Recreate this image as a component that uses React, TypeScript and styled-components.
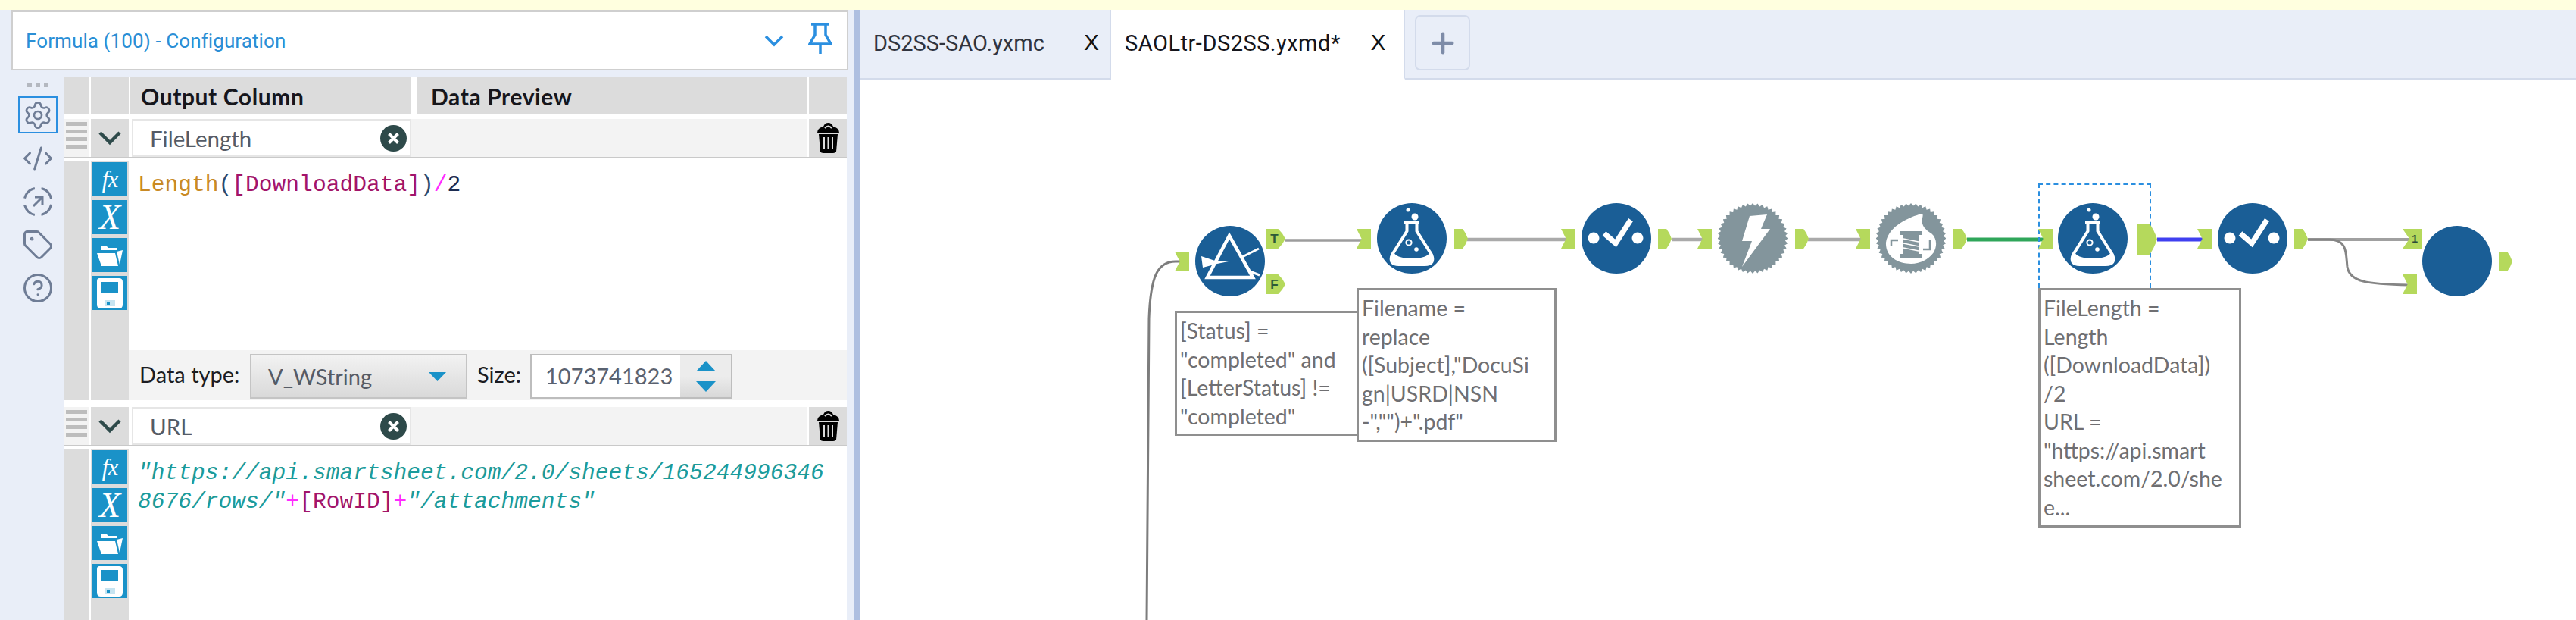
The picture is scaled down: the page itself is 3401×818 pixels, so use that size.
import React from "react";
import styled, { createGlobalStyle } from "styled-components";
import { Settings, CodeXml, Tag, CircleHelp, Plus } from "lucide-react";

const Global = createGlobalStyle`
  html, body { margin: 0; padding: 0; background: #fff; }
  #root { width: 3401px; height: 818px; overflow: hidden; }
  * { box-sizing: border-box; }
`;

const SANS = `Lato, "Liberation Sans", sans-serif`;
const DIN = `Roboto, "Liberation Sans", sans-serif`;
const MONO = `"Liberation Mono", monospace`;
const SERIF = `"Liberation Serif", serif`;
const RAIL = "#e9eef8";
const GRAY = "#dcdcdc";
const STRIP = "#f3f3f3";
const BTN = "#1a92c8";

const Page = styled.div`
  width: 3401px; height: 818px; display: flex; flex-direction: column; overflow: hidden; background: #fff;
`;
const Banner = styled.div`height: 13px; flex: none; background: #ffffdf;`;
const Main = styled.div`flex: 1; display: flex; min-height: 0;`;
const LeftPane = styled.div`
  width: 1128px; flex: none; background: ${RAIL}; padding: 0 5px 0 15px; display: flex; flex-direction: column;
`;
const ConfigHeader = styled.div`
  height: 80px; flex: none; background: #fff; border: 2px solid #cfcfcf; border-top-width: 3px;
  display: flex; align-items: center; padding: 0 19px 0 17px;
  margin-right: 3px;
`;
const Title = styled.div`
  font: 26px ${DIN}; color: #2b8fd6; flex: 1; white-space: nowrap; letter-spacing: 0.1px;
`;
const HeaderChevron = styled.svg`width: 26px; height: 16px; margin-right: 32px; flex: none;`;
const PinIcon = styled.svg`width: 32px; height: 42px; flex: none; margin-top: -6px;`;
const ConfigBody = styled.div`flex: 1; display: flex; margin-top: 9px; min-height: 0;`;
const SideRail = styled.div`
  width: 70px; flex: none; display: flex; flex-direction: column; align-items: center; color: #6f7d96;
`;
const Dots = styled.div`display: flex; gap: 5px; height: 25px; padding-top: 7px;`;
const Dot = styled.i`width: 6px; height: 6px; background: #b4b8c0; display: block;`;
const RailSlot = styled.div<{ $active?: boolean }>`
  width: 52px; height: 49px; margin-bottom: 8px; display: flex; align-items: center; justify-content: center;
  border: 2px solid ${(p) => (p.$active ? "#2b8fe0" : "transparent")};
`;
const Form = styled.div`
  width: 1033px; flex: none; background: #fff; display: flex; flex-direction: column;
`;
const HeadRow = styled.div`display: flex; height: 49px; flex: none; margin-bottom: 6px;`;
const HeadCell = styled.div<{ $w: number; $gap: number }>`
  width: ${(p) => p.$w}px; margin-left: ${(p) => p.$gap}px; flex: none; background: ${GRAY};
  font: 700 30px ${SANS}; letter-spacing: 0.6px; color: #16161c; display: flex; align-items: center;
  padding-left: ${(p) => (p.$w > 400 ? 19 : p.$w > 100 ? 14 : 0)}px;
`;
const FieldRow = styled.div`
  display: flex; height: 52px; flex: none; border-bottom: 2px solid #c9c9c9; background: #fff;
`;
const Handle = styled.div`
  width: 32px; flex: none; background: ${STRIP}; display: flex; flex-direction: column; gap: 5px; padding: 4px 2px 0;
`;
const HandleBar = styled.i`display: block; height: 5px; background: #bdbdbd;`;
const ChevronCell = styled.div`
  width: 50px; margin-left: 3px; flex: none; background: ${GRAY}; display: flex; align-items: center; justify-content: center;
`;
const NameBox = styled.div`
  width: 369px; margin-left: 4px; flex: none; background: #fff; border: 2px solid #e6e6e6; display: flex; align-items: center;
  justify-content: space-between; padding: 0 4px 0 22px; font: 29.5px ${SANS}; color: #555b66;
`;
const RowFill = styled.div`flex: 1; background: ${STRIP};`;
const TrashCell = styled.div`
  width: 50px; margin-left: 2px; flex: none; background: ${GRAY}; display: flex; align-items: center; justify-content: center;
`;
const Block = styled.div<{ $h?: number }>`
  display: flex; flex: ${(p) => (p.$h ? `0 0 ${p.$h}px` : 1)}; min-height: 0; margin-bottom: ${(p) => (p.$h ? 9 : 0)}px;
`;
const Gutter = styled.div`width: 32px; flex: none; background: ${GRAY}; margin-top: 3px;`;
const ToolCol = styled.div`
  width: 50px; margin-left: 3px; margin-top: 3px; flex: none; background: ${GRAY}; display: flex; flex-direction: column;
  gap: 5px; padding: 2px 2px 0;
`;
const ToolBtn = styled.div`
  width: 46px; height: 45px; background: ${BTN}; color: #fff; display: flex; align-items: center; justify-content: center;
  font: italic 36px ${SERIF}; flex: none;
`;
const FxText = styled.span`font-size: 31px; letter-spacing: -1px;`;
const VarText = styled.span`font-size: 46px; line-height: 45px;`;
const Editor = styled.div`flex: 1; display: flex; flex-direction: column; min-width: 0;`;
const Code = styled.div`
  flex: 1; padding: 16px 18px 0 12px; font: 29.6px/38px ${MONO}; color: #1d2c50; word-break: break-all;
`;
const Fn = styled.span`color: #c98a24;`;
const Paren = styled.span`color: #2c4a6e;`;
const Field = styled.span`color: #a3146a;`;
const Op = styled.span`color: #ff2bff;`;
const Str = styled.span`color: #1b9b9b; font-style: italic;`;
const DataStrip = styled.div`
  height: 66px; flex: none; background: ${STRIP}; display: flex; align-items: flex-start; padding: 5px 0 0 14px;
  font: 29px ${SANS}; color: #1c1c22;
`;
const StripLabel = styled.span<{ $w: number }>`width: ${(p) => p.$w}px; flex: none; line-height: 54px;`;
const Dropdown = styled.div`
  width: 287px; height: 59px; flex: none; border: 2px solid #c4c4c4; background: linear-gradient(#f2f2f2, #d9d9d9);
  display: flex; align-items: center; justify-content: space-between; padding: 0 26px 0 22px; color: #555b66; margin-right: 13px;
`;
const SizeBox = styled.div`
  width: 267px; height: 59px; flex: none; border: 2px solid #bdbdbd; display: flex; background: #fff; color: #5a6270;
`;
const SizeValue = styled.div`width: 196px; flex: none; padding-left: 18px; line-height: 54px;`;
const Spinner = styled.div`
  flex: 1; display: flex; flex-direction: column; background: linear-gradient(#ececec 50%, #d8d8d8);
  align-items: center; justify-content: center; gap: 13px;
`;
const Tri = styled.svg<{ $w: number; $h: number }>`width: ${(p) => p.$w}px; height: ${(p) => p.$h}px; flex: none; display: block;`;

const Splitter = styled.div`width: 7px; flex: none; background: #aebfe0;`;
const RightPane = styled.div`flex: 1; display: flex; flex-direction: column; min-width: 0;`;
const TabBar = styled.div`
  height: 92px; flex: none; display: flex; background: ${RAIL};
`;
const Tab = styled.div<{ $active?: boolean; $w: number }>`
  width: ${(p) => p.$w}px; flex: none; background: ${(p) => (p.$active ? "#fff" : RAIL)};
  border-bottom: 2px solid ${(p) => (p.$active ? "#fff" : "#d3dbeb")};
  border-right: 1px solid #d3dbeb;
  display: flex; align-items: center; justify-content: space-between;
  padding: 0 ${(p) => (p.$active ? 24 : 15)}px 2px 18px;
  font: 29px ${DIN}; letter-spacing: ${(p) => (p.$active ? 0.5 : 0)}px; color: ${(p) => (p.$active ? "#15151b" : "#30343f")}; white-space: nowrap;
`;
const TabClose = styled.span`font: 30px "Liberation Sans", sans-serif; color: #111; margin-top: -2px;`;
const TabRest = styled.div`flex: 1; border-bottom: 2px solid #d3dbeb; display: flex; padding: 7px 0 0 13px;`;
const AddTab = styled.div`
  width: 73px; height: 73px; border: 2px solid #d3dbeb; border-radius: 7px; display: flex; align-items: center; justify-content: center; color: #7e8ca8;
`;
const Canvas = styled.div`flex: 1; position: relative; background: #fff; overflow: hidden;`;
const Wires = styled.svg`position: absolute; left: 0; top: 0; width: 2266px; height: 713px;`;
const NodeBox = styled.svg<{ $x: number; $y: number }>`
  position: absolute; left: ${(p) => p.$x - 1135}px; top: ${(p) => p.$y - 105}px; width: 92px; height: 93px;
`;
const AnchorBox = styled.svg<{ $x: number; $y: number; $w: number; $h: number }>`
  position: absolute; left: ${(p) => p.$x - 1135}px; top: ${(p) => p.$y - 105}px; width: ${(p) => p.$w}px; height: ${(p) => p.$h}px;
`;
const Selection = styled.div`
  position: absolute; left: ${2691 - 1135}px; top: ${242 - 105}px; width: 149px; height: 138px;
  border: 2px dashed #2b8fe0; border-bottom: none;
`;
const Annotation = styled.div<{ $x: number; $y: number; $w: number; $h: number; $pt: number }>`
  position: absolute; left: ${(p) => p.$x - 1135}px; top: ${(p) => p.$y - 105}px; width: ${(p) => p.$w}px; height: ${(p) => p.$h}px;
  border: 3px solid #8f8f8f; background: #fff; padding: ${(p) => p.$pt}px 0 0 4px;
  font: 28.5px/37.5px ${SANS}; color: #6f6f72; white-space: pre;
`;
const NoteLine = styled.div`white-space: pre;`;

const ANCHOR = "#b5d95c";

function OutAnchor({ x, y, w = 18, h = 26, label }: { x: number; y: number; w?: number; h?: number; label?: string }) {
  return (
    <AnchorBox $x={x} $y={y} $w={w} $h={h} viewBox={`0 0 ${w} ${h}`}>
      <path d={`M0 0H${w * 0.62}Q${w * 0.85} ${h * 0.2} ${w} ${h / 2}Q${w * 0.85} ${h * 0.8} ${w * 0.62} ${h}H0Z`} fill={ANCHOR} />
      {label && <text x={w * 0.42} y={h / 2 + 6} textAnchor="middle" fontSize="17" fontWeight="700" fontFamily="Liberation Sans" fill="#2c5a38">{label}</text>}
    </AnchorBox>
  );
}
function InAnchor({ x, y, w = 19, h = 26, label }: { x: number; y: number; w?: number; h?: number; label?: string }) {
  return (
    <AnchorBox $x={x} $y={y} $w={w} $h={h} viewBox={`0 0 ${w} ${h}`}>
      <path d={`M0 0H${w}V${h}H0L${w * 0.35} ${h / 2}Z`} fill={ANCHOR} />
      {label && <text x={w * 0.62} y={h / 2 + 5} textAnchor="middle" fontSize="14" fontWeight="700" fontFamily="Liberation Sans" fill="#2c4a38">{label}</text>}
    </AnchorBox>
  );
}

const BLUE = "#1a5e96";
const SLATE = "#83959c";

function serrated(): string {
  const n = 44;
  let d = "";
  for (let i = 0; i < n * 2; i++) {
    const r = i % 2 === 0 ? 46.5 : 43;
    const a = (i * Math.PI) / n;
    d += `${i === 0 ? "M" : "L"}${(46 + r * Math.cos(a)).toFixed(2)} ${(46.5 + r * Math.sin(a)).toFixed(2)}`;
  }
  return d + "Z";
}

function FlaskNode({ x }: { x: number }) {
  return (
    <NodeBox $x={x} $y={268} viewBox="0 0 92 93">
      <ellipse cx="46" cy="46.5" rx="46" ry="46.5" fill={BLUE} />
      <circle cx="50" cy="18" r="4.5" fill="#fff" />
      <circle cx="41" cy="9" r="2.5" fill="#fff" />
      <path d="M36 26H56M39.5 26V37L20 68Q15 81 29 81H63Q77 81 72 68L52.5 37V26" fill="none" stroke="#fff" strokeWidth="4" strokeLinejoin="round" />
      <path d="M21 63Q24 73 46 73Q68 73 71 63Q78 79 62 80H30Q14 79 21 63Z" fill="#fff" />
      <circle cx="42" cy="52" r="3.6" fill="none" stroke="#fff" strokeWidth="2" />
      <circle cx="52" cy="61" r="2.8" fill="#fff" />
    </NodeBox>
  );
}
function CheckNode({ x }: { x: number }) {
  return (
    <NodeBox $x={x} $y={268} viewBox="0 0 92 93">
      <ellipse cx="46" cy="46.5" rx="46" ry="46.5" fill={BLUE} />
      <circle cx="16" cy="46" r="7.5" fill="#fff" />
      <circle cx="74" cy="46" r="7.5" fill="#fff" />
      <path d="M30 40L45 53L65 22" fill="none" stroke="#fff" strokeWidth="7" />
    </NodeBox>
  );
}

function SideIconShare() {
  return (
    <svg width="40" height="40" viewBox="0 0 40 40" fill="none" stroke="currentColor" strokeWidth="3">
      <circle cx="20" cy="20" r="18" strokeDasharray="19.5 8.8" strokeDashoffset="-4" />
      <path d="M14 26L25 15M16 14H26V24" />
    </svg>
  );
}
function Trash() {
  return (
    <svg width="31" height="42" viewBox="0 0 31 42">
      <path d="M1 14Q1 8 9 6Q11 1 15.5 1Q20 1 22 6Q30 8 30 14Z" fill="#000" />
      <path d="M11 8Q15.5 3 20 8" fill="none" stroke="#ddd" strokeWidth="2" />
      <path d="M3 16H28L26 39Q25 41 22 41H9Q6 41 5 39Z" fill="#000" />
      <path d="M10 20V36M15.5 20V36M21 20V36" stroke="#dcdcdc" strokeWidth="2" />
    </svg>
  );
}
function Clear() {
  return (
    <svg width="35" height="35" viewBox="0 0 35 35">
      <circle cx="17.5" cy="17.5" r="17.5" fill="#2e4a4a" />
      <path d="M11.5 11.5L23.5 23.5M23.5 11.5L11.5 23.5" stroke="#fff" strokeWidth="4" />
    </svg>
  );
}
function Chevron() {
  return (
    <svg width="30" height="20" viewBox="0 0 30 20">
      <path d="M2 3L15 16L28 3" fill="none" stroke="#2e4a4a" strokeWidth="4.5" />
    </svg>
  );
}
function FolderIcon() {
  return (
    <svg width="36" height="30" viewBox="0 0 36 30">
      <path d="M6 6V3H14L16 5H28V8H6Z" fill="#fff" />
      <path d="M1 12H25L29 29H7Z" fill="#fff" />
      <path d="M27 10L35 8L31 27Z" fill="#fff" />
    </svg>
  );
}
function SaveIcon() {
  return (
    <svg width="36" height="40" viewBox="0 0 36 40">
      <path d="M4 0H30Q35 0 35 5V35Q35 40 30 40H6Q1 40 1 35V4Q1 0 4 0Z" fill="#fff" />
      <rect x="7" y="5" width="22" height="15" fill={BTN} />
      <rect x="11" y="29" width="14" height="8" fill={BTN} opacity="0.25" />
      <rect x="14" y="31" width="4" height="4" fill={BTN} />
    </svg>
  );
}

function Tools() {
  return (
    <ToolCol>
      <ToolBtn><FxText>fx</FxText></ToolBtn>
      <ToolBtn><VarText>X</VarText></ToolBtn>
      <ToolBtn><FolderIcon /></ToolBtn>
      <ToolBtn><SaveIcon /></ToolBtn>
    </ToolCol>
  );
}

function Row({ name }: { name: string }) {
  return (
    <FieldRow>
      <Handle>{[0, 1, 2, 3].map((i) => <HandleBar key={i} />)}</Handle>
      <ChevronCell><Chevron /></ChevronCell>
      <NameBox>{name}<Clear /></NameBox>
      <RowFill />
      <TrashCell><Trash /></TrashCell>
    </FieldRow>
  );
}

export default function App() {
  return (
    <Page>
      <Global />
      <Banner />
      <Main>
        <LeftPane>
          <ConfigHeader>
            <Title>Formula (100) - Configuration</Title>
            <HeaderChevron viewBox="0 0 26 16"><path d="M2 2L13 13L24 2" fill="none" stroke="#2b8fe0" strokeWidth="3.5" /></HeaderChevron>
            <PinIcon viewBox="0 0 32 42">
              <path d="M4 2H28M9 2V8L9 16L2 28H30L23 16V2M16 28V41" fill="none" stroke="#2b8fe0" strokeWidth="3.5" />
            </PinIcon>
          </ConfigHeader>
          <ConfigBody>
            <SideRail>
              <Dots><Dot /><Dot /><Dot /></Dots>
              <RailSlot $active><Settings size={40} strokeWidth={1.6} /></RailSlot>
              <RailSlot><CodeXml size={42} strokeWidth={1.7} /></RailSlot>
              <RailSlot><SideIconShare /></RailSlot>
              <RailSlot><Tag size={42} strokeWidth={1.7} /></RailSlot>
              <RailSlot><CircleHelp size={42} strokeWidth={1.7} /></RailSlot>
            </SideRail>
            <Form>
              <HeadRow>
                <HeadCell $w={32} $gap={0} />
                <HeadCell $w={50} $gap={3} />
                <HeadCell $w={370} $gap={2}>Output Column</HeadCell>
                <HeadCell $w={515} $gap={8}>Data Preview</HeadCell>
                <HeadCell $w={50} $gap={3} />
              </HeadRow>
              <Row name="FileLength" />
              <Block $h={319}>
                <Gutter />
                <Tools />
                <Editor>
                  <Code><Fn>Length</Fn><Paren>(</Paren><Field>[DownloadData]</Field><Paren>)</Paren><Op>/</Op>2</Code>
                  <DataStrip>
                    <StripLabel $w={146}>Data type:</StripLabel>
                    <Dropdown>V_WString<Tri $w={23} $h={12} viewBox="0 0 23 12"><path d="M0 0H23L11.5 12Z" fill={BTN} /></Tri></Dropdown>
                    <StripLabel $w={70}>Size:</StripLabel>
                    <SizeBox>
                      <SizeValue>1073741823</SizeValue>
                      <Spinner>
                        <Tri $w={26} $h={14} viewBox="0 0 26 14"><path d="M13 0L26 14H0Z" fill={BTN} /></Tri>
                        <Tri $w={26} $h={14} viewBox="0 0 26 14"><path d="M0 0H26L13 14Z" fill={BTN} /></Tri>
                      </Spinner>
                    </SizeBox>
                  </DataStrip>
                </Editor>
              </Block>
              <Row name="URL" />
              <Block>
                <Gutter />
                <Tools />
                <Editor>
                  <Code>
                    <Str>"https://api.smartsheet.com/2.0/sheets/1652449963468676/rows/"</Str><Op>+</Op><Field>[RowID]</Field><Op>+</Op><Str>"/attachments"</Str>
                  </Code>
                </Editor>
              </Block>
            </Form>
          </ConfigBody>
        </LeftPane>
        <Splitter />
        <RightPane>
          <TabBar>
            <Tab $w={332}>DS2SS-SAO.yxmc<TabClose>X</TabClose></Tab>
            <Tab $w={388} $active>SAOLtr-DS2SS.yxmd*<TabClose>X</TabClose></Tab>
            <TabRest><AddTab><Plus size={42} strokeWidth={2.6} /></AddTab></TabRest>
          </TabBar>
          <Canvas>
            <Wires viewBox="1135 105 2266 713">
              <path d="M1560 345H1552C1528 345 1519 365 1517 420L1514 818" fill="none" stroke="#7d7d7d" strokeWidth="3" />
              <path d="M1697 317H1800" stroke="#9c9c9c" strokeWidth="3.5" />
              <path d="M1937 316H2070" stroke="#aaa" strokeWidth="4.5" />
              <path d="M2207 316H2250" stroke="#aaa" strokeWidth="4.5" />
              <path d="M2387 316H2460" stroke="#aaa" strokeWidth="4.5" />
              <path d="M2597 316H2700" stroke="#2fa65a" strokeWidth="5" />
              <path d="M2848 316H2910" stroke="#4040f0" strokeWidth="5" />
              <path d="M3047 316H3180" stroke="#a0a0a0" strokeWidth="4" fill="none" />
              <path d="M3047 316H3075C3100 316 3097 335 3099 352C3102 372 3125 375 3180 376" stroke="#858585" strokeWidth="3" fill="none" />
            </Wires>
            <Selection />

            <InAnchor x={1551} y={332} />
            <NodeBox $x={1578} $y={298} viewBox="0 0 92 93">
              <ellipse cx="46" cy="46.5" rx="46" ry="46.5" fill={BLUE} />
              <path d="M45 13L16 68H76Z" fill="none" stroke="#fff" strokeWidth="4.5" strokeLinejoin="miter" />
              <path d="M8 40L29 47L49 46L29 50L10 55Z" fill="#fff" />
              <path d="M62 41L84 30M72 60L85 65" stroke="#fff" strokeWidth="3" />
            </NodeBox>
            <OutAnchor x={1672} y={302} w={25} label="T" />
            <OutAnchor x={1672} y={362} w={25} label="F" />

            <InAnchor x={1791} y={302} />
            <FlaskNode x={1818} />
            <OutAnchor x={1920} y={302} />

            <InAnchor x={2061} y={302} />
            <CheckNode x={2088} />
            <OutAnchor x={2189} y={302} />

            <InAnchor x={2241} y={302} />
            <NodeBox $x={2268} $y={268} viewBox="0 0 92 93">
              <path d={serrated()} fill={SLATE} />
              <path d="M42 17L65 15L57 34L69 34L32 84L45 50L32 50Z" fill="#fff" />
            </NodeBox>
            <OutAnchor x={2370} y={302} />

            <InAnchor x={2450} y={302} />
            <NodeBox $x={2477} $y={268} viewBox="0 0 92 93">
              <path d={serrated()} fill={SLATE} />
              <path d="M13 52C16 30 45 18 60 14C62 14 62 16 61 20C59 30 66 36 73 40C80 46 81 56 76 65C68 76 56 80 46 80C28 80 12 70 13 52Z" fill="#fff" />
              <path d="M31 37H61V42H56V67H61V72H31V67H36V42H31Z" fill={SLATE} />
              <path d="M36 47L56 51M36 53L56 57M36 59L56 63" stroke="#fff" strokeWidth="1.5" />
              <path d="M20 57V49H29M71 49V61H62" fill="none" stroke={SLATE} strokeWidth="2.5" />
            </NodeBox>
            <OutAnchor x={2579} y={302} />

            <InAnchor x={2691} y={302} />
            <FlaskNode x={2717} />
            <OutAnchor x={2821} y={295} w={27} h={41} />

            <InAnchor x={2901} y={302} />
            <CheckNode x={2928} />
            <OutAnchor x={3029} y={302} />

            <InAnchor x={3172} y={302} w={26} label="1" />
            <InAnchor x={3172} y={362} w={19} />
            <NodeBox $x={3198} $y={298} viewBox="0 0 92 93">
              <ellipse cx="46" cy="46.5" rx="46" ry="46.5" fill={BLUE} />
            </NodeBox>
            <OutAnchor x={3299} y={332} />

            <Annotation $x={1551} $y={410} $w={260} $h={165} $pt={5}>
              <NoteLine>[Status] =</NoteLine>
              <NoteLine>"completed" and</NoteLine>
              <NoteLine>[LetterStatus] !=</NoteLine>
              <NoteLine>"completed"</NoteLine>
            </Annotation>
            <Annotation $x={1791} $y={380} $w={264} $h={203} $pt={5}>
              <NoteLine>Filename =</NoteLine>
              <NoteLine>replace</NoteLine>
              <NoteLine>([Subject],"DocuSi</NoteLine>
              <NoteLine>gn|USRD|NSN</NoteLine>
              <NoteLine>-","")+".pdf"</NoteLine>
            </Annotation>
            <Annotation $x={2691} $y={380} $w={268} $h={316} $pt={5}>
              <NoteLine>FileLength =</NoteLine>
              <NoteLine>Length</NoteLine>
              <NoteLine>([DownloadData])</NoteLine>
              <NoteLine>/2</NoteLine>
              <NoteLine>URL =</NoteLine>
              <NoteLine>"https://api.smart</NoteLine>
              <NoteLine>sheet.com/2.0/she</NoteLine>
              <NoteLine>e...</NoteLine>
            </Annotation>
          </Canvas>
        </RightPane>
      </Main>
    </Page>
  );
}
